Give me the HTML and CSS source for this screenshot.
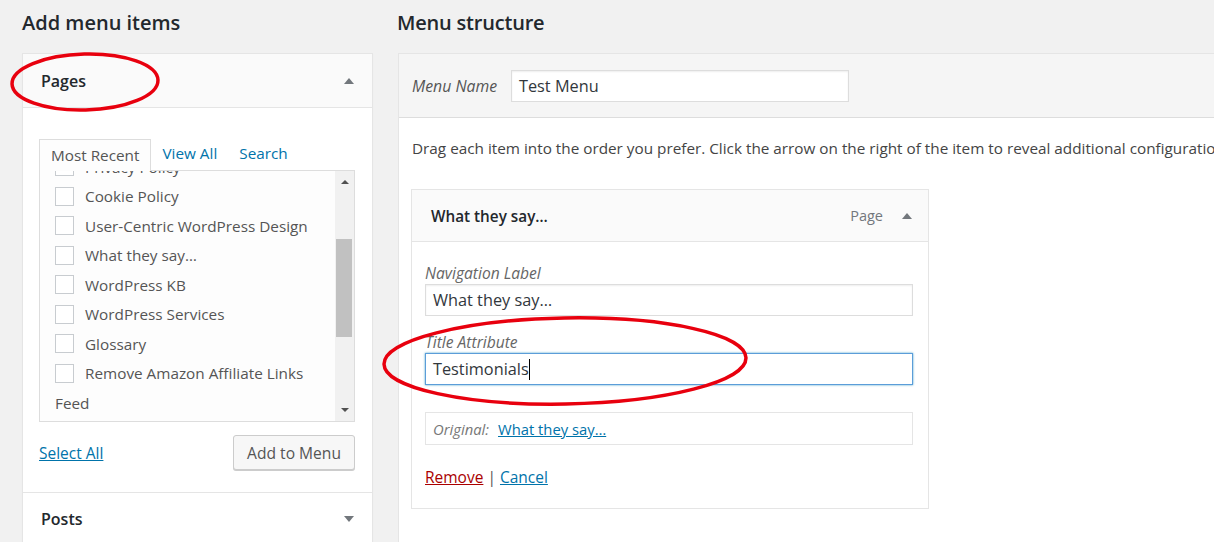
FILE: index.html
```html
<!DOCTYPE html>
<html lang="en">
<head>
<meta charset="utf-8">
<title>Menus</title>
<link rel="stylesheet" href="styles.css">
</head>
<body>
<div class="wrap">
  <div class="col-left">
    <h2 class="heading">Add menu items</h2>
    <div class="box">
      <div class="box-head">
        <span class="box-title">Pages</span>
        <svg class="tri" width="10" height="6" viewBox="0 0 10 6"><path d="M0 6 L5 0 L10 6 Z"/></svg>
      </div>
      <div class="box-body">
        <div class="tabs">
          <span class="tab active">Most Recent</span>
          <a class="tab" href="#">View All</a>
          <a class="tab" href="#">Search</a>
        </div>
        <div class="tabpanel">
          <div class="list-view">
            <ul class="list">
              <li class="row"><span class="cb"></span>Privacy Policy</li>
              <li class="row"><span class="cb"></span>Cookie Policy</li>
              <li class="row"><span class="cb"></span>User-Centric WordPress Design</li>
              <li class="row"><span class="cb"></span>What they say…</li>
              <li class="row"><span class="cb"></span>WordPress KB</li>
              <li class="row"><span class="cb"></span>WordPress Services</li>
              <li class="row"><span class="cb"></span>Glossary</li>
              <li class="row"><span class="cb"></span>Remove Amazon Affiliate Links</li>
              <li class="row plain">Feed</li>
            </ul>
          </div>
          <div class="sbar">
            <div class="sbtn"><svg width="8" height="4" viewBox="0 0 8 4"><path d="M0 4 L4 0 L8 4 Z"/></svg></div>
            <div class="strack"><div class="sthumb"></div></div>
            <div class="sbtn"><svg width="8" height="4" viewBox="0 0 8 4"><path d="M0 0 L4 4 L8 0 Z"/></svg></div>
          </div>
        </div>
        <div class="actions">
          <a class="link" href="#">Select All</a>
          <button class="btn">Add to Menu</button>
        </div>
      </div>
      <div class="box-head sec">
        <span class="box-title">Posts</span>
        <svg class="tri" width="10" height="6" viewBox="0 0 10 6"><path d="M0 0 L5 6 L10 0 Z"/></svg>
      </div>
    </div>
  </div>

  <div class="col-right">
    <h2 class="heading">Menu structure</h2>
    <div class="mpanel">
      <div class="mhead">
        <label class="mlabel">Menu Name</label>
        <div class="field name-field">Test Menu</div>
      </div>
      <div class="mbody">
        <p class="instr">Drag each item into the order you prefer. Click the arrow on the right of the item to reveal additional configuration options.</p>
        <div class="item">
          <div class="item-head">
            <span class="item-title">What they say…</span>
            <span class="item-ctrl"><span class="item-type">Page</span>
              <svg class="tri" width="10" height="6" viewBox="0 0 10 6"><path d="M0 6 L5 0 L10 6 Z"/></svg></span>
          </div>
          <div class="item-body">
            <div class="flabel">Navigation Label</div>
            <div class="field">What they say…</div>
            <div class="flabel gap">Title Attribute</div>
            <div class="field focus">Testimonials<span class="caret"></span></div>
            <div class="orig"><span class="orig-l">Original:</span><a class="link" href="#">What they say…</a></div>
            <div class="item-actions"><a class="remove" href="#">Remove</a> <span class="sep">|</span> <a class="link" href="#">Cancel</a></div>
          </div>
        </div>
      </div>
    </div>
  </div>
</div>

<svg class="marks" width="1214" height="542" viewBox="0 0 1214 542">
  <ellipse cx="85" cy="82" rx="73" ry="28" transform="rotate(-1.5 85 82)"/>
  <ellipse cx="565" cy="361" rx="181" ry="43" transform="rotate(-1 565 361)"/>
</svg>
</body>
</html>
```

FILE: styles.css
```css
* { box-sizing: border-box; }

html, body {
  margin: 0;
  padding: 0;
}

body {
  width: 1214px;
  height: 542px;
  overflow: hidden;
  background: #f1f1f1;
  font-family: "Open Sans", "Noto Sans", sans-serif;
  color: #444;
  position: relative;
}

.wrap {
  display: flex;
  gap: 25px;
  padding-left: 22px;
}

.col-left {
  flex: none;
  width: 351px;
}

.col-right {
  flex: none;
  width: 900px;
}

.heading {
  margin: 0;
  padding: 9px 0 16px;
  font-size: 20px;
  line-height: 28px;
  font-weight: 600;
  color: #23282d;
}

.col-right .heading {
  margin-left: -1px;
  letter-spacing: -0.2px;
}

/* left box */
.box {
  background: #fff;
  border: 1px solid #e5e5e5;
  box-shadow: 0 1px 1px rgba(0,0,0,.04);
}

.box-head {
  height: 54px;
  display: flex;
  align-items: center;
  justify-content: space-between;
  padding: 0 18px;
  background: #fafafa;
  border-bottom: 1px solid #e5e5e5;
}

.box-head.sec {
  background: #fff;
  border-bottom: none;
  height: 52px;
}

.box-title {
  font-size: 16px;
  font-weight: 600;
  color: #23282d;
}

.tri {
  fill: #72777c;
  display: block;
}

.box-body {
  padding: 30px 17px 22px 16px;
  border-bottom: 1px solid #e5e5e5;
}

.tabs {
  display: flex;
  align-items: flex-end;
}

.tab {
  height: 32px;
  line-height: 31px;
  padding: 0 11px 0 11px;
  font-size: 15.3px;
  color: #0073aa;
  text-decoration: none;
}

.tab.active {
  color: #555;
  border: 1px solid #ddd;
  border-bottom: none;
  background: #fdfdfd;
  margin-bottom: -1px;
  position: relative;
  z-index: 1;
}

.tabpanel {
  height: 252px;
  border: 1px solid #ddd;
  background: #fdfdfd;
  display: flex;
}

.list-view {
  flex: 1;
  overflow: hidden;
}

.list {
  list-style: none;
  margin: -19px 0 0;
  padding: 0;
}

.row {
  height: 29.5px;
  display: flex;
  align-items: center;
  padding-left: 15px;
  font-size: 15.3px;
  color: #555;
}

.cb {
  width: 19px;
  height: 19px;
  border: 1px solid #c8ccd0;
  background: #fff;
  margin-right: 11px;
  flex: none;
}

.sbar {
  width: 19px;
  flex: none;
  background: #f1f1f1;
  display: flex;
  flex-direction: column;
}

.sbtn {
  height: 22px;
  display: flex;
  align-items: center;
  justify-content: center;
  fill: #505050;
}

.strack {
  flex: 1;
}

.sthumb {
  width: 16px;
  height: 98px;
  margin: 46px 0 0 1px;
  background: #c1c1c1;
}

.actions {
  margin-top: 13px;
  display: flex;
  align-items: center;
  justify-content: space-between;
}

.link {
  color: #0073aa;
  text-decoration: underline;
  font-size: 15.5px;
}

.btn {
  height: 35px;
  padding: 0 13px;
  font-family: inherit;
  font-size: 15.6px;
  color: #555;
  background: #f7f7f7;
  border: 1px solid #ccc;
  border-radius: 3px;
  box-shadow: 0 1px 0 #ccc;
}

/* right panel */
.mpanel {
  background: #fff;
  border: 1px solid #e5e5e5;
  min-height: 600px;
}

.mhead {
  height: 64px;
  background: #f5f5f5;
  border-bottom: 1px solid #dddddd;
  display: flex;
  align-items: center;
  padding: 0 13px;
}

.mlabel {
  font-style: italic;
  font-size: 15.8px;
  color: #555;
  width: 99px;
}

.field {
  height: 32px;
  border: 1px solid #ddd;
  background: #fff;
  box-shadow: inset 0 1px 2px rgba(0,0,0,.07);
  padding: 0 7px;
  display: flex;
  align-items: center;
  font-size: 16.3px;
  color: #32373c;
}

.name-field {
  width: 338px;
}

.mbody {
  padding: 0 13px;
}

.instr {
  margin: 20px 0 31px;
  font-size: 15.3px;
  line-height: 20px;
  color: #444;
  white-space: nowrap;
}

.item {
  width: 518px;
  margin-left: -1px;
  border: 1px solid #e5e5e5;
  background: #fff;
}

.item-head {
  height: 52px;
  background: #fafafa;
  border-bottom: 1px solid #e5e5e5;
  display: flex;
  align-items: center;
  justify-content: space-between;
  padding: 0 16px 0 19px;
}

.item-title {
  font-size: 15.3px;
  font-weight: 600;
  color: #23282d;
}

.item-ctrl {
  display: flex;
  align-items: center;
  gap: 19px;
}

.item-type {
  font-size: 14.5px;
  color: #72777c;
}

.item-body {
  padding: 21px 15px 21px 13px;
}

.flabel {
  font-style: italic;
  font-size: 15.6px;
  line-height: 20px;
  color: #666;
  margin-bottom: 1px;
}

.flabel.gap {
  margin-top: 16px;
}

.field.focus {
  border-color: #5b9dd9;
  box-shadow: 0 0 2px rgba(30,140,190,.8);
}

.caret {
  display: inline-block;
  width: 1px;
  height: 21px;
  background: #000;
}

.orig {
  margin-top: 27px;
  height: 33px;
  border: 1px solid #e5e5e5;
  display: flex;
  align-items: center;
  gap: 9px;
  padding: 0 7px;
}

.orig-l {
  font-style: italic;
  font-size: 14.8px;
  color: #777;
}

.orig .link {
  font-size: 14.8px;
}

.item-actions {
  margin-top: 22px;
  font-size: 15.5px;
  line-height: 20px;
  color: #555;
}

.remove {
  color: #a00;
  text-decoration: underline;
}

.item-actions .link {
  font-size: 15.5px;
}

.marks {
  position: absolute;
  left: 0;
  top: 0;
  pointer-events: none;
  fill: none;
  stroke: #e8000e;
  stroke-width: 3.5;
}
```
